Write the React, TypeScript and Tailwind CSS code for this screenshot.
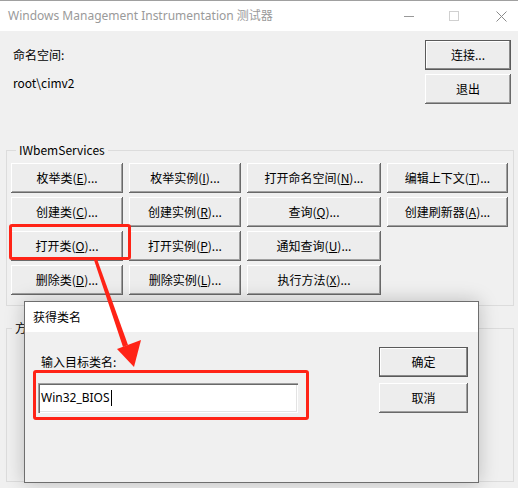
import React from "react";

const btn =
  "flex items-center justify-center h-[30px] bg-[#ededed] text-[12px] leading-[16px] text-black shadow-[inset_-1px_-1px_#696969,inset_1px_1px_#ffffff,inset_-2px_-2px_#a0a0a0]";
const btnDefault =
  "flex items-center justify-center h-[30px] bg-[#ededed] text-[12px] leading-[16px] text-black shadow-[inset_0_0_0_1px_#5a5a5a,inset_-2px_-2px_#8a8a8a,inset_2px_2px_#ffffff]";

function L({ pre, k, post = ")..." }: { pre: string; k: string; post?: string }) {
  return (
    <span>
      {pre}(<u>{k}</u>
      {post}
    </span>
  );
}

export default function App() {
  return (
    <div className="relative w-[518px] h-[488px] overflow-hidden bg-[#f0f0f0] text-[12px] leading-[16px] text-black font-['Noto_Sans_CJK_SC','Noto_Sans',sans-serif]">
      {/* Title bar */}
      <div className="h-[31px] bg-white border-t border-[#a0a0a0] flex items-center justify-between">
        <span className="pl-[8px] text-[#9a9a9a] text-[12px] font-['Noto_Sans','Noto_Sans_CJK_SC',sans-serif]">
          Windows Management Instrumentation 测试器
        </span>
        <div className="flex items-center h-full pr-[11px]">
          <div className="w-[10px] h-px bg-[#999]" />
          <div className="ml-[35px] w-[10px] h-[10px] border border-[#d0d0d0]" />
          <svg className="ml-[37px]" width="11" height="11" viewBox="0 0 11 11">
            <path d="M0.5 0.5 L10.5 10.5 M10.5 0.5 L0.5 10.5" stroke="#8a8a8a" strokeWidth="1" />
          </svg>
        </div>
      </div>

      {/* Body */}
      <div className="flex flex-col">
        <div className="h-[111px] flex justify-between">
          <div className="pl-[13px] pt-[16px] flex flex-col gap-[12px]">
            <span>命名空间:</span>
            <span>root\cimv2</span>
          </div>
          <div className="pt-[9px] pr-[7px] flex flex-col gap-[4px]">
            <div className={`${btnDefault} w-[86px]`}>连接...</div>
            <div className={`${btn} w-[86px]`}>退出</div>
          </div>
        </div>

        <fieldset className="ml-[6px] w-[508px] h-[164px] border border-[#dcdcdc] pl-[4px] pt-[5px]">
          <legend className="ml-[5px] px-[3px] leading-[16px]">IWbemServices</legend>
          <div className="grid grid-cols-[112px_112px_134px_121px] gap-x-[6px] gap-y-[4px]">
            <div className={btn}><L pre="枚举类" k="E" /></div>
            <div className={btn}><L pre="枚举实例" k="I" /></div>
            <div className={btn}><L pre="打开命名空间" k="N" /></div>
            <div className={btn}><L pre="编辑上下文" k="T" /></div>
            <div className={btn}><L pre="创建类" k="C" /></div>
            <div className={btn}><L pre="创建实例" k="R" /></div>
            <div className={btn}><L pre="查询" k="Q" /></div>
            <div className={btn}><L pre="创建刷新器" k="A" /></div>
            <div className={btn}><L pre="打开类" k="O" /></div>
            <div className={btn}><L pre="打开实例" k="P" /></div>
            <div className={btn}><L pre="通知查询" k="U" /></div>
            <div />
            <div className={btn}><L pre="删除类" k="D" /></div>
            <div className={btn}><L pre="删除实例" k="L" /></div>
            <div className={btn}><L pre="执行方法" k="X" /></div>
            <div />
          </div>
        </fieldset>

        <fieldset className="mt-[14px] ml-[6px] w-[508px] h-[162px] border border-[#dcdcdc]">
          <legend className="ml-[5px] px-[3px] leading-[16px]">方法</legend>
        </fieldset>
      </div>

      {/* Red highlight around 打开类 */}
      <div className="absolute left-[9px] top-[224px] w-[122px] h-[36px] border-[3px] border-[#ff2316] rounded-[3px]" />

      {/* Dialog */}
      <div className="absolute left-[24px] top-[301px] w-[455px] h-[182px] border border-[#6e6e6e] bg-[#f0f0f0] shadow-[0_0_18px_rgba(0,0,0,0.22)] flex flex-col">
        <div className="h-[30px] bg-white flex items-center pl-[8px]">获得类名</div>
        <div className="flex pt-[15px] pl-[13px]">
          <div className="flex flex-col w-[260px]">
            <span className="mt-[7px] pl-[3px]">输入目标类名:</span>
            <div className="mt-[13px] h-[30px] bg-white shadow-[inset_1px_1px_#a0a0a0,inset_2px_2px_#696969,inset_-1px_-1px_#ffffff,inset_-2px_-2px_#e3e3e3] flex items-center pl-[3px]">
              <span className="font-['Noto_Sans','Noto_Sans_CJK_SC',sans-serif] text-[12px]">Win32_BIOS</span>
              <span className="ml-px w-px h-[16px] bg-black" />
            </div>
          </div>
          <div className="ml-[81px] flex flex-col gap-[6px]">
            <div className={`${btnDefault} w-[89px]`}>确定</div>
            <div className={`${btn} w-[89px]`}>取消</div>
          </div>
        </div>
      </div>

      {/* Red highlight around input */}
      <div className="absolute left-[33px] top-[370px] w-[276px] h-[50px] border-[3px] border-[#ff2316] rounded-[3px]" />

      {/* Arrow */}
      <svg className="absolute left-0 top-0 pointer-events-none" width="518" height="488" viewBox="0 0 518 488">
        <polygon points="94,260 97,259 128,345 123,347" fill="#ff2316" />
        <polygon points="117,349 141,340 134,367" fill="#ff2316" />
      </svg>
    </div>
  );
}
